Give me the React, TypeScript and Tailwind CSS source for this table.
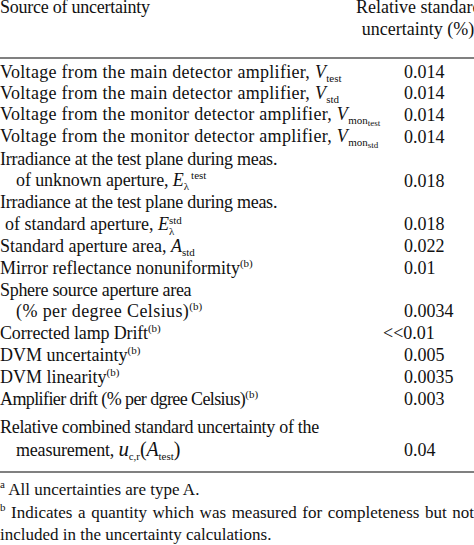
import React from "react";

const Sub = ({ children }: { children: React.ReactNode }) => (
  <span className="align-[-4px] text-[11px] leading-none tracking-normal">{children}</span>
);
const Sup = ({ children }: { children: React.ReactNode }) => (
  <span className="align-[7px] text-[11px] leading-none tracking-normal">{children}</span>
);

type Row = { label: React.ReactNode; value?: React.ReactNode; cls?: string };

const rows: Row[] = [
  {
    label: <>Voltage from the main detector amplifier, <i>V</i><Sub>test</Sub></>,
    value: "0.014",
    cls: "tracking-[0.3px]",
  },
  {
    label: <>Voltage from the main detector amplifier, <i>V</i><Sub>std</Sub></>,
    value: "0.014",
    cls: "tracking-[0.3px]",
  },
  {
    label: (
      <>
        Voltage from the monitor detector amplifier, <i>V</i>
        <Sub>
          mon<span className="align-[-2px] text-[9px]">test</span>
        </Sub>
      </>
    ),
    value: "0.014",
    cls: "tracking-[0.3px]",
  },
  {
    label: (
      <>
        Voltage from the monitor detector amplifier, <i>V</i>
        <Sub>
          mon<span className="align-[-2px] text-[9px]">std</span>
        </Sub>
      </>
    ),
    value: "0.014",
    cls: "tracking-[0.3px]",
  },
  { label: <>Irradiance at the test plane during meas.</>, cls: "tracking-[-0.25px]" },
  {
    label: (
      <>
        of unknown aperture, <i>E</i>
        <Sub>λ</Sub>
        <Sup>
          <span className="ml-[2px]">test</span>
        </Sup>
      </>
    ),
    value: "0.018",
    cls: "pl-[16px] tracking-[-0.1px]",
  },
  { label: <>Irradiance at the test plane during meas.</>, cls: "tracking-[-0.25px]" },
  {
    label: (
      <>
        of standard aperture, <i>E</i>
        <span className="inline-flex flex-col align-middle text-[11px] leading-[11px] tracking-normal">
          <span>std</span>
          <span>λ</span>
        </span>
      </>
    ),
    value: "0.018",
    cls: "pl-[5px]",
  },
  { label: <>Standard aperture area, <i>A</i><Sub>std</Sub></>, value: "0.022" },
  { label: <>Mirror reflectance nonuniformity<Sup>(b)</Sup></>, value: "0.01" },
  { label: <>Sphere source aperture area</>, cls: "tracking-[-0.3px]" },
  {
    label: <>(% per degree Celsius)<Sup>(b)</Sup></>,
    value: "0.0034",
    cls: "pl-[16px] tracking-[0.4px]",
  },
  {
    label: <>Corrected lamp Drift<Sup>(b)</Sup></>,
    value: <span className="-ml-[21px]">&lt;&lt;0.01</span>,
    cls: "tracking-[-0.15px]",
  },
  { label: <>DVM uncertainty<Sup>(b)</Sup></>, value: "0.005" },
  { label: <>DVM linearity<Sup>(b)</Sup></>, value: "0.0035" },
  {
    label: <>Amplifier drift (% per dgree Celsius)<Sup>(b)</Sup></>,
    value: "0.003",
    cls: "tracking-[-0.6px]",
  },
];

function TableRow({ label, value, cls }: Row) {
  return (
    <div className="flex h-[21.8px] items-center whitespace-nowrap">
      <div className={`flex-1 ${cls ?? ""}`}>{label}</div>
      <div className="w-[70px]">{value}</div>
    </div>
  );
}

export default function App() {
  return (
    <div className="w-[474px] h-[545px] overflow-hidden bg-white text-[#111] text-[18px] leading-[21.8px] font-['Liberation_Serif','Times_New_Roman',serif]">
      <div className="flex justify-between -mt-[3px] whitespace-nowrap">
        <div className="tracking-[-0.25px]">Source of uncertainty</div>
        <div className="text-center w-[124px] -mr-[6px] shrink-0">
          <div>Relative standard</div>
          <div>uncertainty (%)</div>
        </div>
      </div>
      <div className="mt-[16px] h-[2px] bg-[#808080]" />
      <div className="mt-[3px]">
        {rows.map((r, i) => (
          <TableRow key={i} {...r} />
        ))}
      </div>
      <div className="h-[7px]" />
      <div className="flex h-[21.8px] items-center whitespace-nowrap">
        <div className="flex-1 tracking-[-0.3px]">Relative combined standard uncertainty of the</div>
        <div className="w-[70px]" />
      </div>
      <div className="flex h-[23px] items-center whitespace-nowrap">
        <div className="flex-1 pl-[16px] tracking-[-0.2px]">
          measurement,{" "}
          <span className="text-[21px]">
            <i>u</i>
          </span>
          <Sub>c,r</Sub>
          <span className="text-[20px]">
            (<i>A</i>
          </span>
          <Sub>test</Sub>
          <span className="text-[20px]">)</span>
        </div>
        <div className="w-[70px]">0.04</div>
      </div>
      <div className="mt-[9px] h-[2px] bg-[#808080]" />
      <div className="mt-[6px] text-[17px] leading-[22.5px]">
        <div className="whitespace-nowrap">
          <Sup>a</Sup> All uncertainties are type A.
        </div>
        <div className="whitespace-nowrap text-justify [text-align-last:justify]">
          <Sup>b</Sup> Indicates a quantity which was measured for completeness but not
        </div>
        <div className="whitespace-nowrap">included in the uncertainty calculations.</div>
      </div>
    </div>
  );
}
